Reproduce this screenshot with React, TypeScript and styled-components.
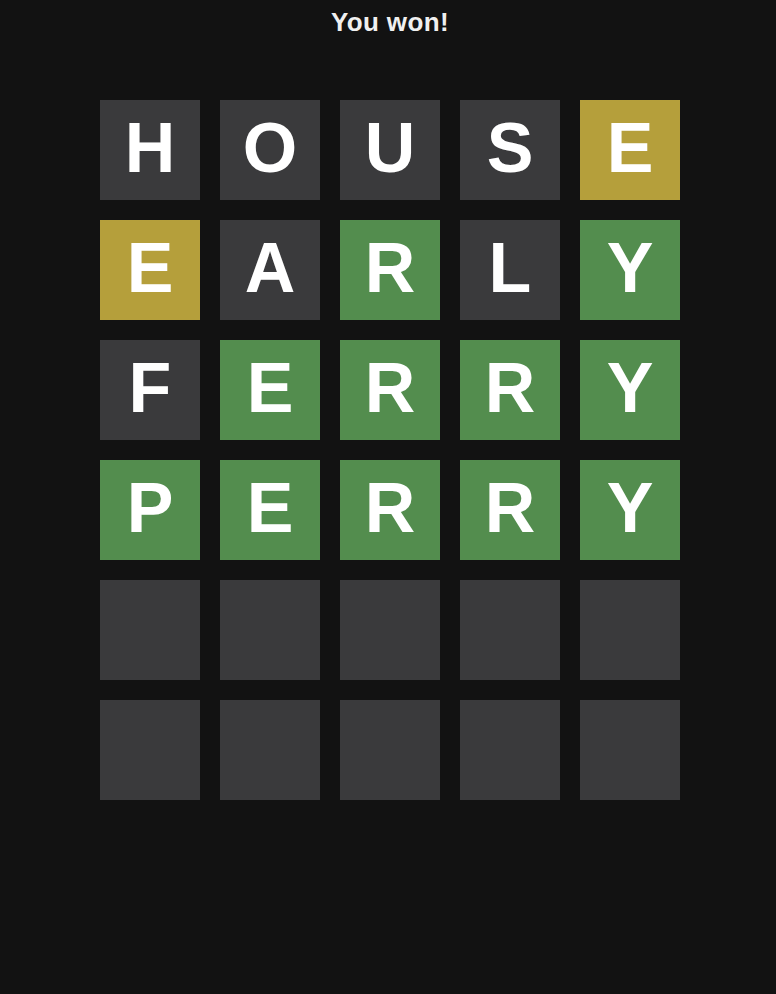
import * as React from 'react';
import styled, { createGlobalStyle } from 'styled-components';

const GlobalStyle = createGlobalStyle`
    html, body {
        margin: 0;
        padding: 0;
        background: #121212;
    }
    body {
        font-family: "Liberation Sans", Arial, sans-serif;
        color: #ffffff;
    }
`;

const Page = styled.div`
    min-height: 994px;
    padding: 0 96px 0 100px;
    box-sizing: border-box;
    display: flex;
    flex-direction: column;
    align-items: flex-start;
`;

const Status = styled.h1`
    width: 580px;
    margin: 7px 0 0 0;
    height: 30px;
    font-size: 26px;
    line-height: 30px;
    font-weight: 700;
    letter-spacing: 0.4px;
    text-align: center;
    color: #f0f0f0;
`;

const Board = styled.div`
    margin-top: 63px;
    display: grid;
    grid-template-columns: repeat(5, 100px);
    grid-auto-rows: 100px;
    gap: 20px;
`;

type TileState = 'absent' | 'present' | 'correct' | 'empty';

const TILE_COLORS: Record<TileState, string> = {
    absent: '#3a3a3c',
    present: '#b59f3b',
    correct: '#538d4e',
    empty: '#3a3a3c',
};

const Tile = styled.div<{ $state: TileState }>`
    box-sizing: border-box;
    display: flex;
    align-items: center;
    justify-content: center;
    background: ${(p) => TILE_COLORS[p.$state]};
    font-size: 70px;
    font-weight: 700;
    line-height: 1;
    color: #ffffff;
    padding-bottom: 4px;
`;

const guesses: { word: string; states: TileState[] }[] = [
    { word: 'HOUSE', states: ['absent', 'absent', 'absent', 'absent', 'present'] },
    { word: 'EARLY', states: ['present', 'absent', 'correct', 'absent', 'correct'] },
    { word: 'FERRY', states: ['absent', 'correct', 'correct', 'correct', 'correct'] },
    { word: 'PERRY', states: ['correct', 'correct', 'correct', 'correct', 'correct'] },
];

const ROWS = 6;

export default function App() {
    const rows = [];
    for (let r = 0; r < ROWS; r++) {
        const guess = guesses[r];
        for (let c = 0; c < 5; c++) {
            rows.push(
                <Tile key={`${r}-${c}`} $state={guess ? guess.states[c] : 'empty'}>
                    {guess ? guess.word[c] : ''}
                </Tile>
            );
        }
    }

    return (
        <>
            <GlobalStyle />
            <Page>
                <Status>You won!</Status>
                <Board>{rows}</Board>
            </Page>
        </>
    );
}
